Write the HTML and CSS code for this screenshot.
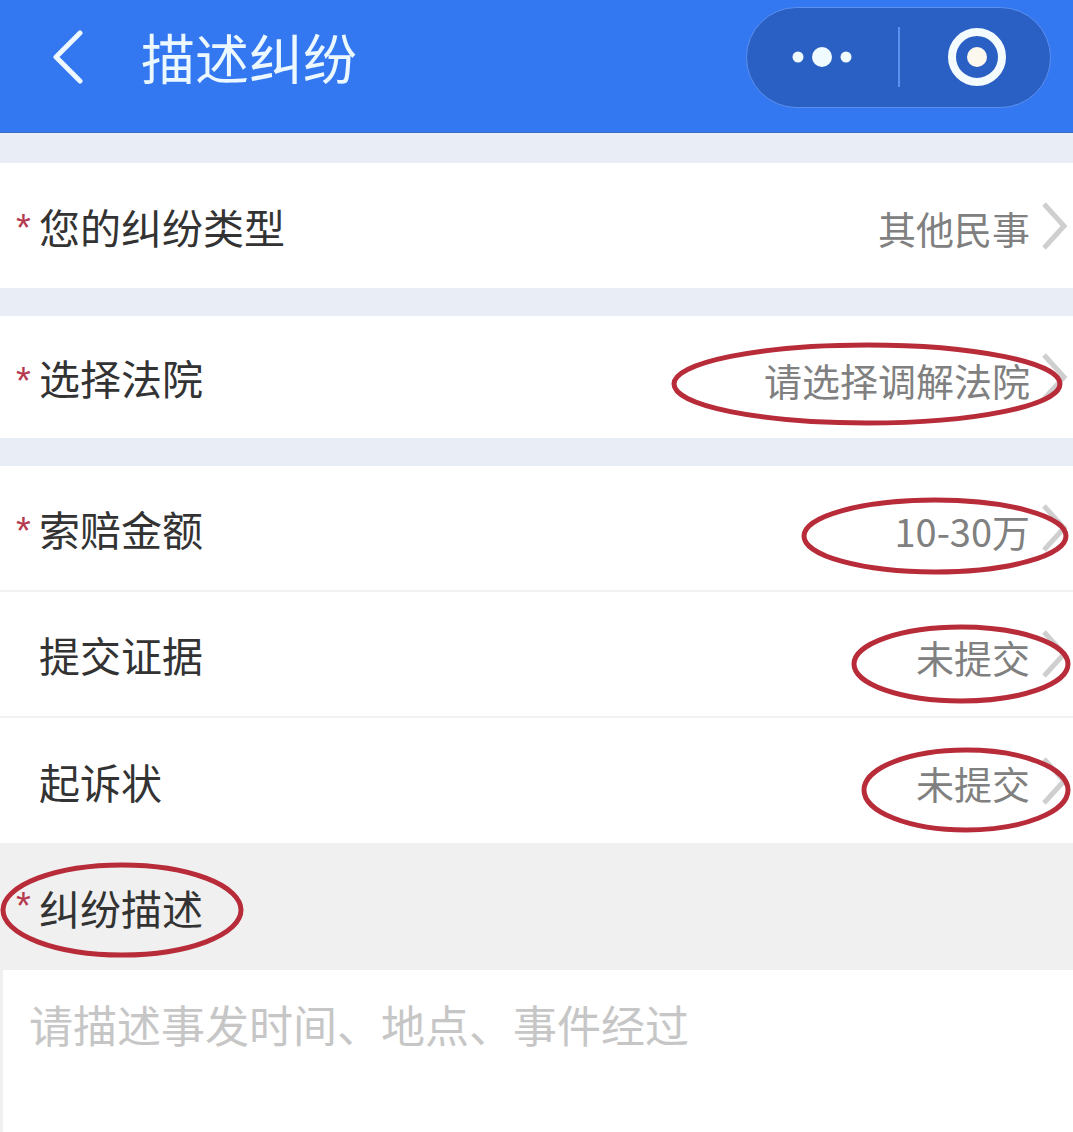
FILE: index.html
```html
<!DOCTYPE html>
<html lang="zh-CN">
<head>
    <meta charset="UTF-8">
    <meta name="viewport" content="width=device-width, initial-scale=1.0">
    <title>描述纠纷</title>
    <link rel="stylesheet" href="styles.css">
</head>
<body>
    <div class="page">
        <header class="nav-bar">
            <svg class="nav-back" viewBox="0 0 30 54">
                <path d="M27 3 L3 27 L27 51"/>
            </svg>
            <h1 class="nav-title">描述纠纷</h1>
            <div class="capsule">
                <svg class="capsule-more" viewBox="0 0 60 24">
                    <circle cx="6" cy="12" r="5.5"/>
                    <circle cx="30" cy="12" r="10"/>
                    <circle cx="54" cy="12" r="5.5"/>
                </svg>
                <div class="capsule-line"></div>
                <svg class="capsule-close" viewBox="0 0 58 58">
                    <circle class="ring" cx="29" cy="29" r="25"/>
                    <circle cx="29" cy="29" r="10"/>
                </svg>
            </div>
        </header>

        <section class="group">
            <div class="row">
                <span class="star">*</span>
                <span class="row-label">您的纠纷类型</span>
                <span class="row-value">其他民事</span>
                <svg class="chevron" viewBox="0 0 26 48"><path d="M3 2 L23 24 L3 46"/></svg>
            </div>
        </section>

        <section class="group">
            <div class="row row-short">
                <span class="star">*</span>
                <span class="row-label">选择法院</span>
                <span class="row-value">请选择调解法院</span>
                <svg class="chevron" viewBox="0 0 26 48"><path d="M3 2 L23 24 L3 46"/></svg>
            </div>
        </section>

        <section class="group">
            <div class="row row-line">
                <span class="star">*</span>
                <span class="row-label">索赔金额</span>
                <span class="row-value">10-30万</span>
                <svg class="chevron" viewBox="0 0 26 48"><path d="M3 2 L23 24 L3 46"/></svg>
            </div>
            <div class="row row-line">
                <span class="star"></span>
                <span class="row-label">提交证据</span>
                <span class="row-value">未提交</span>
                <svg class="chevron" viewBox="0 0 26 48"><path d="M3 2 L23 24 L3 46"/></svg>
            </div>
            <div class="row">
                <span class="star"></span>
                <span class="row-label">起诉状</span>
                <span class="row-value">未提交</span>
                <svg class="chevron" viewBox="0 0 26 48"><path d="M3 2 L23 24 L3 46"/></svg>
            </div>
        </section>

        <section class="desc">
            <div class="desc-head">
                <span class="star">*</span>
                <span class="row-label">纠纷描述</span>
            </div>
            <div class="desc-box">请描述事发时间、地点、事件经过</div>
        </section>

        <!-- red marks drawn over the screenshot -->
        <svg class="marks" viewBox="0 0 1073 1132">
            <ellipse cx="867" cy="384" rx="193" ry="39"/>
            <ellipse cx="935" cy="536" rx="131" ry="36"/>
            <ellipse cx="961" cy="664" rx="107" ry="37"/>
            <ellipse cx="966" cy="790" rx="102" ry="40"/>
            <ellipse cx="122" cy="910" rx="119" ry="45"/>
        </svg>
    </div>
</body>
</html>
```

FILE: styles.css
```css
* {
    margin: 0;
    padding: 0;
    box-sizing: border-box;
}

body {
    font-family: "Noto Sans CJK SC", "Noto Sans", sans-serif;
    background: #f0f0f0;
    overflow: hidden;
}

.page {
    position: relative;
    width: 1073px;
    height: 1132px;
    overflow: hidden;
    background: #e9edf5;
}

/* Top bar */
.nav-bar {
    display: flex;
    align-items: center;
    height: 133px;
    padding: 0 22px 18px 53px;
    background: #3478f1;
    border-bottom: 1px solid #3d6fc0;
}

.nav-back {
    width: 30px;
    height: 54px;
    fill: none;
    stroke: #eef8ff;
    stroke-width: 5;
    stroke-linecap: round;
    stroke-linejoin: round;
}

.nav-title {
    margin-left: 58px;
    font-size: 54px;
    font-weight: 400;
    line-height: 64px;
    color: #ecf8ff;
}

.capsule {
    display: flex;
    align-items: center;
    width: 305px;
    height: 101px;
    margin-left: auto;
    padding-left: 45px;
    background: #2a5fc4;
    border: 1px solid #5b90ee;
    border-radius: 51px;
}

.capsule-more {
    width: 60px;
    height: 24px;
    fill: #f0fbff;
}

.capsule-line {
    width: 2px;
    height: 60px;
    margin-left: 46px;
    background: #5b90ee;
}

.capsule-close {
    width: 58px;
    height: 58px;
    margin-left: 48px;
    fill: #fdf8ee;
}

.capsule-close .ring {
    fill: none;
    stroke: #f3fbff;
    stroke-width: 8;
}

/* List rows */
.group {
    margin-top: 30px;
    background: #fff;
}

.group + .group {
    margin-top: 28px;
}

.row {
    display: flex;
    align-items: center;
    height: 125px;
    padding: 0 6px 0 16px;
}

.row-short {
    height: 122px;
}

.row-line {
    height: 126px;
    border-bottom: 2px solid #f2f2f2;
}

.star {
    width: 23px;
    align-self: flex-start;
    font-family: "Liberation Sans", sans-serif;
    font-size: 38px;
    line-height: 1;
    color: #b53a50;
}

.row .star {
    margin-top: 46px;
}

.row-label {
    font-size: 41px;
    line-height: 50px;
    color: #333;
}

.row-value {
    margin-left: auto;
    padding-top: 5px;
    font-size: 38px;
    line-height: 50px;
    color: #808080;
}

.chevron {
    width: 26px;
    height: 48px;
    margin-left: 11px;
    fill: none;
    stroke: #cfcfcf;
    stroke-width: 5;
}

/* Description block */
.desc {
    height: 289px;
    padding-left: 3px;
    background: #f0f0f0;
}

.desc-head {
    display: flex;
    align-items: center;
    height: 127px;
    margin-left: -3px;
    padding-left: 16px;
}

.desc-head .star {
    margin-top: 44px;
}

.desc-box {
    height: 162px;
    padding: 26px 0 0 26px;
    background: #fff;
    font-size: 44px;
    line-height: 56px;
    color: #c6c6c6;
}

/* Hand-drawn marks */
.marks {
    position: absolute;
    top: 0;
    left: 0;
    width: 1073px;
    height: 1132px;
    fill: none;
    stroke: #b82c3a;
    stroke-width: 5;
}
```
